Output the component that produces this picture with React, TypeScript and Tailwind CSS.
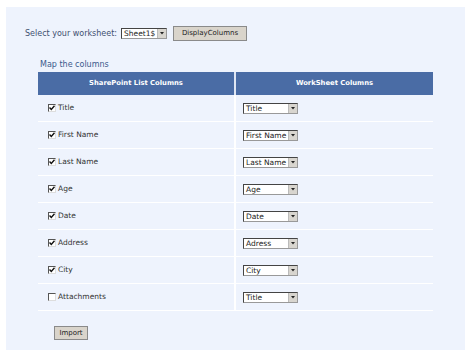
import React from 'react'

const rows = [
  { label: 'Title', value: 'Title', checked: true },
  { label: 'First Name', value: 'First Name', checked: true },
  { label: 'Last Name', value: 'Last Name', checked: true },
  { label: 'Age', value: 'Age', checked: true },
  { label: 'Date', value: 'Date', checked: true },
  { label: 'Address', value: 'Adress', checked: true },
  { label: 'City', value: 'City', checked: true },
  { label: 'Attachments', value: 'Title', checked: false }
]

function CheckBox({ checked }: { checked: boolean }) {
  return (
    <div className="flex h-[8px] w-[8px] items-center justify-center border-t border-l border-t-[#555] border-l-[#555] border-b border-r border-b-[#ddd] border-r-[#ddd] bg-white">
      {checked && (
        <svg width="6" height="6" viewBox="0 0 6 6">
          <path d="M0.5 2.5 L2.3 4.5 L5.5 0.8" stroke="#111" strokeWidth="1.4" fill="none" />
        </svg>
      )}
    </div>
  )
}

function FakeSelect({ value, width }: { value: string; width: string }) {
  return (
    <div className={`flex h-[11px] items-stretch border-t border-l border-t-[#444] border-l-[#444] border-b border-r border-b-[#999] border-r-[#999] bg-white ${width}`}>
      <span className="flex-1 truncate pl-[2px] text-[7.5px] leading-[10px] text-[#222]">{value}</span>
      <span className="flex w-[9px] items-center justify-center border-l border-[#bbb] bg-[#d8d5cf]">
        <svg width="4" height="3" viewBox="0 0 4 3">
          <path d="M0 0 L4 0 L2 2.5 Z" fill="#222" />
        </svg>
      </span>
    </div>
  )
}

export default function App() {
  return (
    <div className="h-[350px] w-[474px] overflow-hidden bg-white font-['DejaVu_Sans',sans-serif]">
      <div className="ml-[6px] mt-[7px] h-[343px] w-[459px] bg-[#eef3fd] pt-[19px]">
        <div className="flex items-center pl-[19px]">
          <span className="text-[8px] text-[#3f5070]">Select your worksheet:</span>
          <div className="ml-[4px]">
            <FakeSelect value="Sheet1$" width="w-[46px]" />
          </div>
          <button className="ml-[6px] h-[15px] w-[74px] border border-[#8a8a8a] bg-[#d9d4cb] text-[7px] text-[#222]">
            DisplayColumns
          </button>
        </div>

        <div className="ml-[34px] mt-[18px] text-[8px] text-[#3b5a8c]">Map the columns</div>

        <div className="ml-[32px] mt-[1px] w-[395px]">
          <div className="grid h-[23px] grid-cols-[198px_197px] bg-[#4a6ca5]">
            <div className="flex items-center justify-center border-r-2 border-[#dfe6f3] text-[6.8px] font-bold text-white">
              SharePoint List Columns
            </div>
            <div className="flex items-center justify-center text-[6.8px] font-bold text-white">WorkSheet Columns</div>
          </div>
          {rows.map((r) => (
            <div key={r.label} className="grid h-[27px] grid-cols-[198px_197px] border-b border-white">
              <div className="flex items-center gap-[2px] border-r-2 border-white pl-[10px]">
                <CheckBox checked={r.checked} />
                <span className="text-[7.5px] text-[#333]">{r.label}</span>
              </div>
              <div className="flex items-center pl-[7px]">
                <FakeSelect value={r.value} width="w-[55px]" />
              </div>
            </div>
          ))}
        </div>

        <button className="ml-[48px] mt-[15px] h-[14px] w-[34px] border border-[#8a8a8a] bg-[#d9d4cb] text-[7px] text-[#222]">
          Import
        </button>
      </div>
    </div>
  )
}
